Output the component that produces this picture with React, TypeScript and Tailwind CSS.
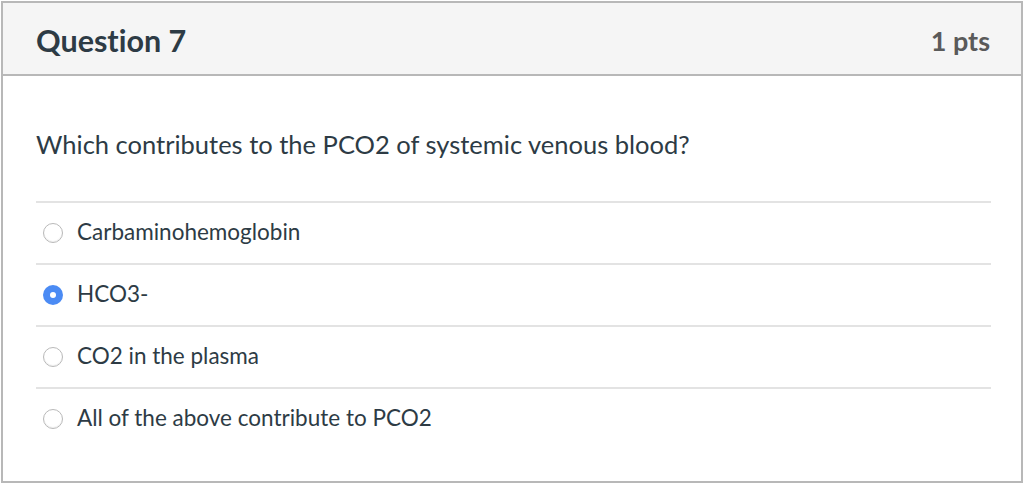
import React from "react";

const options = [
  { label: "Carbaminohemoglobin", checked: false },
  { label: "HCO3-", checked: true },
  { label: "CO2 in the plasma", checked: false },
  { label: "All of the above contribute to PCO2", checked: false },
];

function Radio({ checked }: { checked: boolean }) {
  if (checked) {
    return (
      <span className="flex h-[20px] w-[20px] shrink-0 items-center justify-center rounded-full bg-[#4b8bf4]">
        <span className="h-[6px] w-[6px] rounded-full bg-white" />
      </span>
    );
  }
  return (
    <span className="h-[20px] w-[20px] shrink-0 rounded-full border border-[#b9b9b9] bg-white shadow-[inset_0_-1px_1px_rgba(0,0,0,0.06)]" />
  );
}

export default function App() {
  return (
    <div
      className="h-[485px] w-[1024px] bg-white p-px [font-variant-ligatures:none]"
      style={{ fontFamily: "Lato, 'Liberation Sans', sans-serif" }}
    >
      <div className="flex h-[482px] flex-col border-2 border-[#b8b8b8]">
        <div className="flex h-[73px] shrink-0 items-center justify-between border-b-2 border-[#b8b8b8] bg-[#f5f5f5] pl-[33px] pr-[31px]">
          <div className="mt-[3px] text-[30.5px] font-bold leading-none text-[#2d3b45]">Question 7</div>
          <div className="mt-[3px] text-[27px] font-bold leading-none text-[#5a5a5a]">1 pts</div>
        </div>
        <div className="flex flex-col pl-[33px] pr-[30px]">
          <div className="flex h-[125px] items-center pt-[11px] text-[25.5px] text-[#2d3b45]">
            Which contributes to the PCO2 of systemic venous blood?
          </div>
          {options.map((o) => (
            <div
              key={o.label}
              className="flex h-[62px] items-center gap-[14px] border-t-2 border-[#e3e3e3] pl-[7px] text-[22.5px] text-[#2d3b45]"
            >
              <Radio checked={o.checked} />
              <span className="-mt-[3px]">{o.label}</span>
            </div>
          ))}
        </div>
      </div>
    </div>
  );
}
